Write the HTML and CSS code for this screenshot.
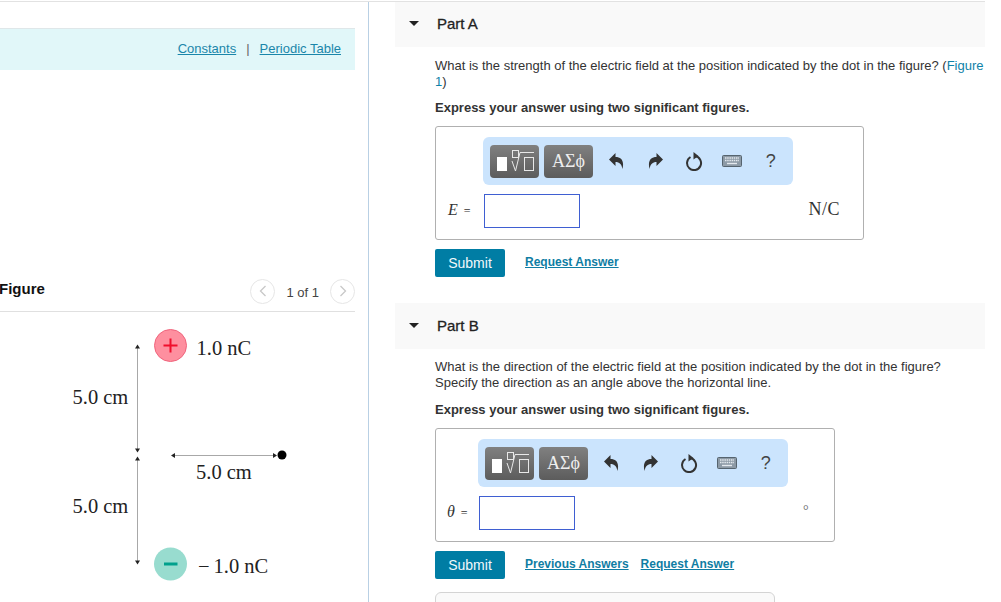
FILE: index.html
```html
<!DOCTYPE html>
<html lang="en">
<head>
    <meta charset="UTF-8">
    <meta name="viewport" content="width=device-width, initial-scale=1.0">
    <title>Electric field problem</title>
    <link rel="stylesheet" href="styles.css">
</head>
<body>
    <svg class="sprite">
        <symbol id="i-templates" viewBox="0 0 49 33">
            <rect x="7" y="12" width="10" height="14" fill="#fff"/>
            <g fill="none" stroke="#e8e8e8" stroke-width="1">
                <rect x="22.5" y="5.5" width="6" height="7"/>
                <path d="M22 16l3.500 10L30 7.500h14"/>
                <rect x="34.500" y="12.500" width="9" height="13"/>
            </g>
        </symbol>
        <symbol id="i-undo" viewBox="0 0 15 16">
            <path d="M0 6.500L6.500 0v4C12 4 15.500 7.500 13.500 16 12.500 11 10.500 9 6.500 9v4z" fill="#333"/>
        </symbol>
        <symbol id="i-reset" viewBox="0 0 18 19">
            <path d="M5.500 5a7 7 0 1 0 4.500-.9" fill="none" stroke="#333" stroke-width="2"/>
            <path d="M8.500 0l5 4-5 3.500z" fill="#333"/>
        </symbol>
        <symbol id="i-keyboard" viewBox="0 0 20 12">
            <rect x=".5" y=".5" width="19" height="11" rx="1" fill="#8d9aa6" stroke="#56646f"/>
            <path d="M3 3h14M3 5.500h14" stroke="#e4e9ee" stroke-width="1.400" stroke-dasharray="1.500 .7"/>
            <path d="M5 8.500h10" stroke="#e4e9ee" stroke-width="1.400"/>
        </symbol>
    </svg>

    <div class="page">
        <aside class="side">
            <div class="links-bar">
                <a href="#">Constants</a>
                <span class="sep">|</span>
                <a href="#">Periodic Table</a>
            </div>

            <div class="figure-head">
                <h2>Figure</h2>
                <div class="pager">
                    <button class="pager-btn"><svg width="8" height="12" viewBox="0 0 8 12"><path d="M6.500 1L1.500 6l5 5" fill="none" stroke="#c8c8c8" stroke-width="1.300"/></svg></button>
                    <span>1 of 1</span>
                    <button class="pager-btn"><svg width="8" height="12" viewBox="0 0 8 12"><path d="M1.500 1l5 5-5 5" fill="none" stroke="#c8c8c8" stroke-width="1.300"/></svg></button>
                </div>
            </div>

            <svg class="diagram" width="355" height="290" viewBox="0 312 355 290">
                <g stroke="#a8a8a8" stroke-width="1" fill="none">
                    <path d="M137.500 348V451M137.500 459V562M173 455.500H275"/>
                </g>
                <g fill="#222">
                    <path d="M137.500 344.500l2.500 4h-5z"/>
                    <path d="M137.500 452.500l2.500-4h-5z"/>
                    <path d="M137.500 456.500l2.500 4h-5z"/>
                    <path d="M137.500 564.500l2.500-4h-5z"/>
                    <path d="M171 455.500l4-2.500v5z"/>
                    <path d="M277 455.500l-4-2.500v5z"/>
                    <circle cx="282" cy="455" r="4.500" fill="#000"/>
                </g>
                <circle cx="170.500" cy="345.500" r="16" fill="#fe8f9f" stroke="#f0647c"/>
                <path d="M163.500 345.500h14M170.500 338.500v14" stroke="#f00f2d" stroke-width="2"/>
                <circle cx="170.500" cy="564" r="16.500" fill="#98dccf"/>
                <path d="M164 564h13.500" stroke="#00a08c" stroke-width="3"/>
                <g class="diagram-text">
                    <text x="196.500" y="355">1.0 nC</text>
                    <text x="72.500" y="404">5.0 cm</text>
                    <text x="196" y="479">5.0 cm</text>
                    <text x="72.500" y="513">5.0 cm</text>
                    <text x="198" y="573">−<tspan dx="4">1.0 nC</tspan></text>
                </g>
            </svg>
        </aside>

        <main class="parts">
            <section class="part part-a">
                <div class="part-head">
                    <span class="caret"></span>
                    <h3>Part A</h3>
                </div>
                <div class="part-body">
                    <p class="question">What is the strength of the electric field at the position indicated by the dot in the figure? (<a href="#">Figure 1</a>)</p>
                    <p class="hint">Express your answer using two significant figures.</p>
                    <div class="answer-box">
                        <div class="toolbar">
                            <button class="tool-btn"><svg width="49" height="33"><use href="#i-templates"/></svg></button>
                            <button class="tool-btn tool-greek">ΑΣϕ</button>
                            <span class="tool"><svg width="15" height="16"><use href="#i-undo"/></svg></span>
                            <span class="tool"><svg class="flip" width="15" height="16"><use href="#i-undo"/></svg></span>
                            <span class="tool"><svg width="18" height="19"><use href="#i-reset"/></svg></span>
                            <span class="tool"><svg width="20" height="12"><use href="#i-keyboard"/></svg></span>
                            <span class="tool tool-help">?</span>
                        </div>
                        <div class="answer-row">
                            <label class="var"><i>E</i> <small>=</small></label>
                            <input class="answer-input" type="text">
                            <span class="unit">N/C</span>
                        </div>
                    </div>
                    <div class="actions">
                        <button class="submit">Submit</button>
                        <a href="#">Request Answer</a>
                    </div>
                </div>
            </section>

            <section class="part part-b">
                <div class="part-head">
                    <span class="caret"></span>
                    <h3>Part B</h3>
                </div>
                <div class="part-body">
                    <p class="question">What is the direction of the electric field at the position indicated by the dot in the figure? Specify the direction as an angle above the horizontal line.</p>
                    <p class="hint">Express your answer using two significant figures.</p>
                    <div class="answer-box">
                        <div class="toolbar">
                            <button class="tool-btn"><svg width="49" height="33"><use href="#i-templates"/></svg></button>
                            <button class="tool-btn tool-greek">ΑΣϕ</button>
                            <span class="tool"><svg width="15" height="16"><use href="#i-undo"/></svg></span>
                            <span class="tool"><svg class="flip" width="15" height="16"><use href="#i-undo"/></svg></span>
                            <span class="tool"><svg width="18" height="19"><use href="#i-reset"/></svg></span>
                            <span class="tool"><svg width="20" height="12"><use href="#i-keyboard"/></svg></span>
                            <span class="tool tool-help">?</span>
                        </div>
                        <div class="answer-row">
                            <label class="var"><i>θ</i> <small>=</small></label>
                            <input class="answer-input" type="text">
                            <span class="unit unit-deg">°</span>
                        </div>
                    </div>
                    <div class="actions">
                        <button class="submit">Submit</button>
                        <a href="#">Previous Answers</a>
                        <a href="#">Request Answer</a>
                    </div>
                    <div class="next-box"></div>
                </div>
            </section>
        </main>
    </div>
</body>
</html>
```

FILE: styles.css
```css
html, body {
    margin: 0;
    padding: 0;
    height: 602px;
    overflow: hidden;
    background: #fff;
}

body {
    font-family: "Liberation Sans", Arial, sans-serif;
    font-size: 13px;
    color: #333;
}

.sprite {
    display: none;
}

.page {
    display: flex;
    width: 985px;
    height: 600px;
    margin-top: 1px;
    border-top: 1px solid #e2e2e2;
    overflow: hidden;
}

/* left column */
.side {
    width: 368px;
    flex: none;
    border-right: 1px solid #b9d0e4;
}

.links-bar {
    display: flex;
    justify-content: flex-end;
    align-items: center;
    gap: 10px;
    width: 355px;
    height: 42px;
    box-sizing: border-box;
    margin-top: 26px;
    padding: 0 14px 2px 0;
    background: #e1f7f9;
    border-top: 1px solid #dfe7e9;
    color: #666;
}

.links-bar a {
    color: #1a86aa;
}

.figure-head {
    display: flex;
    justify-content: space-between;
    align-items: center;
    width: 355px;
    height: 38px;
    box-sizing: border-box;
    margin-top: 204px;
    padding-bottom: 3px;
    border-bottom: 1px solid #e0e0e0;
}

.figure-head h2 {
    margin: 0 0 0 -1px;
    padding-bottom: 6px;
    font-size: 15px;
    font-weight: bold;
    color: #111;
}

.pager {
    display: flex;
    align-items: center;
    gap: 11px;
    color: #444;
}

.pager span {
    padding-top: 3px;
}

.pager-btn {
    display: flex;
    align-items: center;
    justify-content: center;
    width: 25px;
    height: 25px;
    padding: 0;
    background: #fff;
    border: 1px solid #e6e6e6;
    border-radius: 50%;
}

.diagram {
    display: block;
}

.diagram-text {
    font-family: "Liberation Serif", "Times New Roman", serif;
    font-size: 20.500px;
    fill: #222;
}

/* right column */
.parts {
    flex: 1;
    min-width: 0;
    padding-left: 26px;
}

.part-head {
    display: flex;
    align-items: center;
    height: 45px;
    box-sizing: border-box;
    padding-bottom: 2px;
    background: #f9f9f9;
}

.part-b {
    margin-top: 26px;
}

.part-b .part-head {
    height: 46px;
}

.caret {
    width: 0;
    height: 0;
    margin-left: 14px;
    border-left: 5px solid transparent;
    border-right: 5px solid transparent;
    border-top: 5px solid #222;
}

.part-head h3 {
    margin: 0 0 0 18px;
    font-size: 15px;
    font-weight: normal;
    color: #222;
    -webkit-text-stroke: 0.3px #222;
}

.part-body {
    padding-left: 40px;
}

.question {
    margin: 10px 0 0;
    line-height: 16px;
}

.part-a .question {
    margin-top: 11px;
}

.question a {
    color: #0f82a8;
    text-decoration: none;
}

.hint {
    margin: 11px 0 10px;
    font-size: 13px;
    line-height: 16px;
    font-weight: bold;
}

.part-a .hint {
    margin-top: 10px;
}

.answer-box {
    width: 429px;
    height: 114px;
    box-sizing: border-box;
    padding: 10px 0 0 47px;
    border: 1px solid #b0b0b0;
    border-radius: 3px;
}

.part-b .answer-box {
    width: 400px;
    padding-left: 42px;
}

.toolbar {
    display: flex;
    align-items: center;
    gap: 5px;
    width: 310px;
    height: 48px;
    box-sizing: border-box;
    padding-left: 7px;
    background: #cbe4fd;
    border-radius: 6px;
}

.tool-btn {
    width: 49px;
    height: 33px;
    padding: 0;
    background: linear-gradient(#808080, #5c5c5c);
    border: 0;
    border-radius: 4px;
}

.tool-btn svg {
    display: block;
}

.tool-greek {
    margin-right: 2px;
    font-family: "Liberation Serif", serif;
    font-size: 18px;
    color: #eee;
}

.tool {
    display: flex;
    align-items: center;
    justify-content: center;
    width: 33.500px;
    height: 33px;
}

.flip {
    transform: scaleX(-1);
}

.tool-help {
    font-size: 18px;
    color: #444;
}

.answer-row {
    display: flex;
    align-items: center;
    height: 34px;
    margin: 9px 0 0 -47px;
}

.part-b .answer-row {
    margin-left: -42px;
}

.var {
    width: 48px;
    box-sizing: border-box;
    padding: 0 0 3px 12px;
    font-family: "Liberation Serif", serif;
    font-size: 16px;
}

.var small {
    margin-left: 2px;
    font-size: 12px;
}

.part-b .var {
    width: 43px;
    padding-left: 11px;
}

.answer-input {
    width: 96px;
    height: 34px;
    box-sizing: border-box;
    padding: 0;
    background: #fff;
    border: 1px solid #3f5fd2;
    outline: none;
}

.unit {
    margin-left: auto;
    padding: 0 23px 3px 0;
    font-family: "Liberation Serif", serif;
    font-size: 18px;
    letter-spacing: 0.5px;
}

.unit-deg {
    padding: 0 25px 4px 0;
    font-size: 14px;
    color: #666;
}

.actions {
    display: flex;
    align-items: flex-start;
    gap: 12px;
    margin-top: 9px;
}

.actions a {
    padding-top: 6px;
    font-size: 12px;
    font-weight: bold;
    color: #0f7da3;
}

.submit {
    width: 70px;
    height: 28px;
    margin-right: 8px;
    padding: 0;
    font-family: inherit;
    font-size: 14px;
    color: #f2f8fb;
    background: #007da4;
    border: 0;
    border-radius: 2px;
}

.next-box {
    width: 340px;
    height: 30px;
    box-sizing: border-box;
    margin-top: 13px;
    background: #fafafa;
    border: 1px solid #d4d4d4;
    border-radius: 6px 6px 0 0;
}
```
